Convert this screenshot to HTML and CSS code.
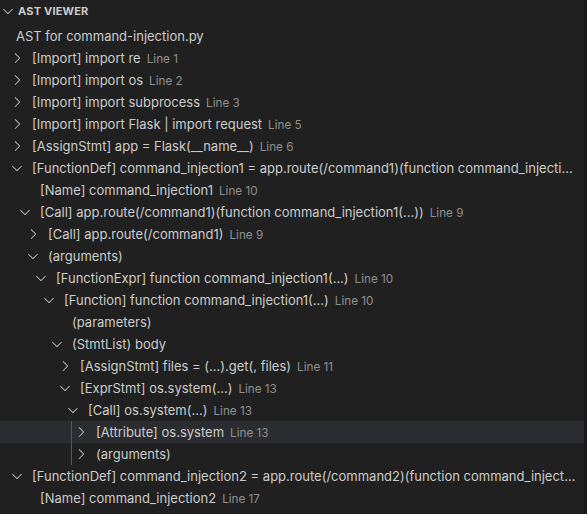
FILE: index.html
```html
<!DOCTYPE html>
<html>
<head>
<meta charset="utf-8">
<link rel="stylesheet" href="styles.css">
</head>
<body>
<div class="pane">
  <div class="pane-header">
    <svg class="ico" viewBox="0 0 16 16"><path d="M7.976 10.072l4.357-4.357.62.618L8.284 11h-.618L3 6.333l.619-.618 4.357 4.357z"/></svg>
    <span class="pane-title">AST Viewer</span>
  </div>
  <div class="tree">
    <div class="row root"><span class="label">AST for command-injection.py</span></div>

    <div class="row d0"><span class="tw r"></span><span class="label">[Import] import re<span class="desc">Line 1</span></span></div>
    <div class="row d0"><span class="tw r"></span><span class="label">[Import] import os<span class="desc">Line 2</span></span></div>
    <div class="row d0"><span class="tw r"></span><span class="label">[Import] import subprocess<span class="desc">Line 3</span></span></div>
    <div class="row d0"><span class="tw r"></span><span class="label">[Import] import Flask | import request<span class="desc">Line 5</span></span></div>
    <div class="row d0"><span class="tw r"></span><span class="label">[AssignStmt] app = Flask(__name__)<span class="desc">Line 6</span></span></div>
    <div class="row d0"><span class="tw d"></span><span class="label">[FunctionDef] command_injection1 = app.route(/command1)(function command_injection1(...))<span class="desc">Line 9</span></span></div>
    <div class="row d1"><span class="tw"></span><span class="label">[Name] command_injection1<span class="desc">Line 10</span></span></div>
    <div class="row d1"><span class="tw d"></span><span class="label">[Call] app.route(/command1)(function command_injection1(...))<span class="desc">Line 9</span></span></div>
    <div class="row d2"><span class="tw r"></span><span class="label">[Call] app.route(/command1)<span class="desc">Line 9</span></span></div>
    <div class="row d2"><span class="tw d"></span><span class="label">(arguments)</span></div>
    <div class="row d3"><span class="tw d"></span><span class="label">[FunctionExpr] function command_injection1(...)<span class="desc">Line 10</span></span></div>
    <div class="row d4"><span class="tw d"></span><span class="label">[Function] function command_injection1(...)<span class="desc">Line 10</span></span></div>
    <div class="row d5"><span class="tw"></span><span class="label">(parameters)</span></div>
    <div class="row d5"><span class="tw d"></span><span class="label">(StmtList) body</span></div>
    <div class="row d6"><span class="tw r"></span><span class="label">[AssignStmt] files = (...).get(, files)<span class="desc">Line 11</span></span></div>
    <div class="row d6"><span class="tw d"></span><span class="label">[ExprStmt] os.system(...)<span class="desc">Line 13</span></span></div>
    <div class="row d7"><span class="tw d"></span><span class="label">[Call] os.system(...)<span class="desc">Line 13</span></span></div>
    <div class="row d8 guided hover"><span class="tw r"></span><span class="label">[Attribute] os.system<span class="desc">Line 13</span></span></div>
    <div class="row d8 guided"><span class="tw r"></span><span class="label">(arguments)</span></div>
    <div class="row d0"><span class="tw d"></span><span class="label">[FunctionDef] command_injection2 = app.route(/command2)(function command_injection2(...))<span class="desc">Line 17</span></span></div>
    <div class="row d1"><span class="tw"></span><span class="label">[Name] command_injection2<span class="desc">Line 17</span></span></div>
  </div>
</div>
</body>
</html>
```

FILE: styles.css
```css
html, body {
  margin: 0;
  padding: 0;
  background: #202020;
}
body {
  font-family: Inter, "Open Sans", "Liberation Sans", sans-serif;
  font-size: 13px;
  color: #cccccc;
  width: 587px;
  height: 514px;
  overflow: hidden;
}
.pane {
  width: 584px;
  height: 514px;
  border-right: 3px solid #1a1a1a;
  background: #202020;
}
.pane-header {
  display: flex;
  align-items: center;
  height: 22px;
  padding-bottom: 3px;
}
.pane-header .ico {
  width: 16px;
  height: 16px;
  flex: none;
  margin-right: 2px;
  fill: #c5c5c5;
}
.pane-title {
  font-size: 11px;
  font-weight: 700;
  letter-spacing: 0.2px;
  text-transform: uppercase;
  color: #cccccc;
}
.tree {
  display: flex;
  flex-direction: column;
}
.row {
  position: relative;
  display: flex;
  align-items: center;
  height: 22px;
  padding-right: 8px;
  white-space: nowrap;
}
.row.hover {
  background: #2b2c30;
}
.row.root { padding-left: 16px; }
.d0 { padding-left: 9px; }
.d1 { padding-left: 17px; }
.d2 { padding-left: 25px; }
.d3 { padding-left: 33px; }
.d4 { padding-left: 41px; }
.d5 { padding-left: 49px; }
.d6 { padding-left: 57px; }
.d7 { padding-left: 65px; }
.d8 { padding-left: 73px; }
.guided::before {
  content: "";
  position: absolute;
  left: 71px;
  top: 0;
  bottom: 0;
  width: 1px;
  background: #585858;
}
.tw {
  flex: none;
  width: 16px;
  height: 16px;
  margin-right: 7px;
  background-repeat: no-repeat;
  background-position: center;
}
.tw.r {
  background-image: url("data:image/svg+xml;utf8,<svg xmlns='http://www.w3.org/2000/svg' viewBox='0 0 16 16'><path fill='%23c5c5c5' d='M10.072 8.024L5.715 3.667l.618-.62L11 7.716v.618L6.333 13l-.618-.619 4.357-4.357z'/></svg>");
}
.tw.d {
  background-image: url("data:image/svg+xml;utf8,<svg xmlns='http://www.w3.org/2000/svg' viewBox='0 0 16 16'><path fill='%23c5c5c5' d='M7.976 10.072l4.357-4.357.62.618L8.284 11h-.618L3 6.333l.619-.618 4.357 4.357z'/></svg>");
}
.label {
  flex: 1 1 auto;
  min-width: 0;
  overflow: hidden;
  text-overflow: ellipsis;
  white-space: nowrap;
}
.desc {
  margin-left: 6px;
  font-size: 0.9em;
  color: #8f8f8f;
}
```
